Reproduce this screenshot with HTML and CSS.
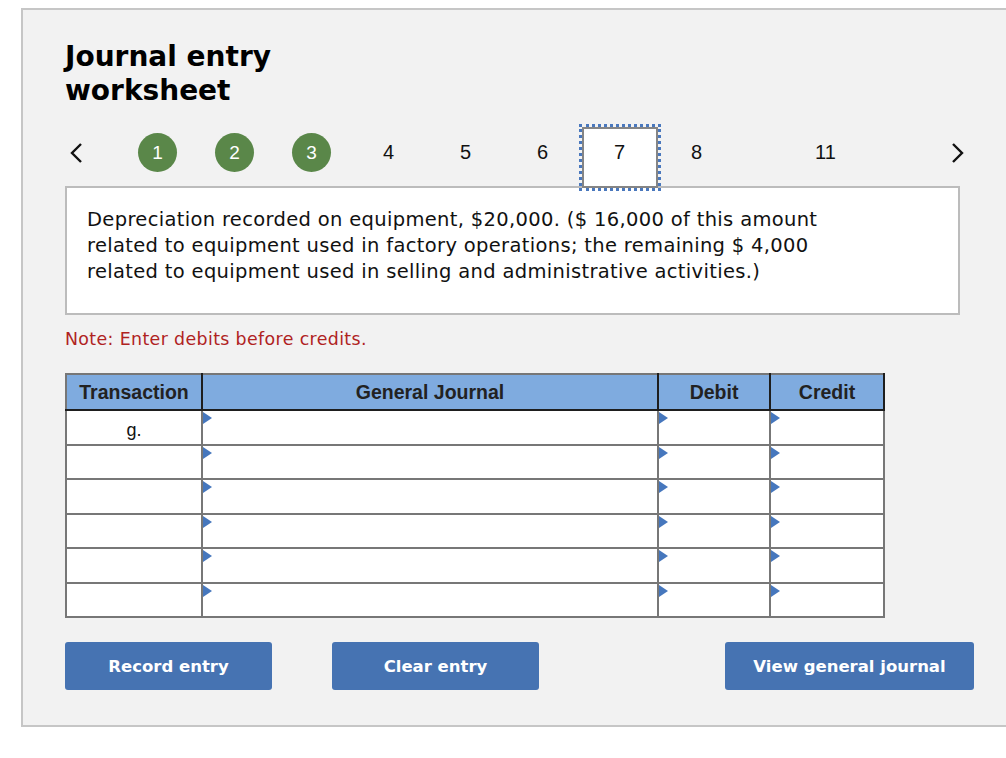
FILE: index.html
```html
<!DOCTYPE html>
<html>
<head>
<meta charset="utf-8">
<link rel="stylesheet" href="styles.css">
</head>
<body>
<div class="panel">
  <h1 class="title">Journal entry<br>worksheet</h1>
  <div class="nav">
    <span class="arrow prev"><svg width="14" height="22" viewBox="0 0 14 22"><path d="M12 2 L3 11 L12 20" fill="none" stroke="#111" stroke-width="2.4"/></svg></span>
    <span class="step"><span class="done">1</span></span>
    <span class="step"><span class="done">2</span></span>
    <span class="step"><span class="done">3</span></span>
    <span class="step">4</span>
    <span class="step">5</span>
    <span class="step">6</span>
    <span class="step current"><span class="cur-box">7</span></span>
    <span class="step">8</span>
    <span class="step skip">11</span>
    <span class="arrow next"><svg width="14" height="22" viewBox="0 0 14 22"><path d="M2 2 L11 11 L2 20" fill="none" stroke="#111" stroke-width="2.4"/></svg></span>
  </div>
  <div class="desc"><p class="desc-text">Depreciation recorded on equipment, $20,000. ($ 16,000 of this amount related to equipment used in factory operations; the remaining $ 4,000 related to equipment used in selling and administrative activities.)</p></div>
  <p class="note">Note: Enter debits before credits.</p>
  <table class="journal">
    <thead>
      <tr><th class="c1">Transaction</th><th class="c2">General Journal</th><th class="c3">Debit</th><th class="c4">Credit</th></tr>
    </thead>
    <tbody>
      <tr><td class="c1">g.</td><td class="dd"></td><td class="dd"></td><td class="dd"></td></tr>
      <tr><td class="c1"></td><td class="dd"></td><td class="dd"></td><td class="dd"></td></tr>
      <tr><td class="c1"></td><td class="dd"></td><td class="dd"></td><td class="dd"></td></tr>
      <tr><td class="c1"></td><td class="dd"></td><td class="dd"></td><td class="dd"></td></tr>
      <tr><td class="c1"></td><td class="dd"></td><td class="dd"></td><td class="dd"></td></tr>
      <tr><td class="c1"></td><td class="dd"></td><td class="dd"></td><td class="dd"></td></tr>
    </tbody>
  </table>
  <div class="buttons">
    <button class="btn rec">Record entry</button>
    <button class="btn clr">Clear entry</button>
    <button class="btn view">View general journal</button>
  </div>
</div>
</body>
</html>
```
FILE: styles.css
```css
html, body { margin: 0; padding: 0; background: #fff; }
body { font-family: "DejaVu Sans", Verdana, sans-serif; color: #111; }
.panel {
  margin: 8px 0 0 21px;
  width: 1000px;
  height: 719px;
  box-sizing: border-box;
  border: 2px solid #c6c6c6;
  background: #f2f2f2;
  padding: 30px 0 0 42px;
}
.title {
  margin: 0;
  font-size: 28px;
  line-height: 34px;
  font-weight: bold;
  color: #000;
}
.nav {
  margin-top: 17px;
  height: 61px;
  display: flex;
  align-items: center;
  font-family: "Liberation Sans", Arial, sans-serif;
  font-size: 20px;
  color: #111;
  position: relative;
  z-index: 2;
}
.arrow { width: 16px; display: flex; justify-content: center; margin-top: -6px; }
.prev { margin-left: 3px; margin-right: 35px; }
.step {
  width: 77px;
  display: flex;
  justify-content: center;
  align-items: center;
  margin-top: -6px;
}
.done {
  width: 39px; height: 39px; border-radius: 50%;
  background: #5a8749; color: #fff;
  display: flex; align-items: center; justify-content: center;
  font-size: 19px;
}
.current { margin-top: 3px; }
.cur-box {
  width: 76px; height: 61px; box-sizing: border-box;
  border: 2px solid #858585;
  outline: 3px dotted #4a78bd;
  outline-offset: 0;
  background: #fff;
  display: flex; justify-content: center; align-items: flex-start;
  padding-top: 12px;
}
.skip { margin-left: 52px; }
.next { margin-left: 86px; }
.desc {
  width: 895px;
  box-sizing: border-box;
  background: #fff;
  border: 2px solid #bcbcbc;
  padding: 19px 20px 28px 20px;
  position: relative;
  z-index: 1;
}
.desc-text {
  margin: 0;
  max-width: 770px;
  font-size: 19.5px;
  letter-spacing: 0.33px;
  line-height: 26px;
  color: #111;
}
.note {
  margin: 14px 0 0 0;
  font-size: 17.4px;
  letter-spacing: 0.36px;
  line-height: 20px;
  color: #b0231f;
}
.journal {
  margin-top: 24px;
  border-collapse: collapse;
  font-family: "Liberation Sans", Arial, sans-serif;
  background: #fff;
  border: 2px solid #777;
}
.journal th {
  background: #7fabdf;
  border: 2px solid #1e1e1e;
  border-top-color: #777;
  height: 34px;
  font-size: 19.5px;
  font-weight: bold;
  color: #222;
  padding: 0;
}
.journal thead th:first-child { border-left-color: #777; }
.journal td {
  border: 2px solid #777;
  height: 32.5px;
  padding: 0;
  font-size: 18px;
  position: relative;
  vertical-align: top;
}
.c1 { width: 134px; text-align: center; }
.journal td.c1 { padding-top: 9px; height: 23.5px; line-height: 20px; }
.c2 { width: 454px; }
.c3 { width: 110px; }
.c4 { width: 112px; }
.dd::before {
  content: "";
  position: absolute;
  left: 0; top: 1px;
  border-left: 9px solid #4677bd;
  border-top: 6px solid transparent;
  border-bottom: 6px solid transparent;
}
.buttons {
  margin-top: 24px;
  display: flex;
  width: 909px;
}
.btn {
  height: 48px;
  border: none;
  border-radius: 3px;
  background: #4673b2;
  color: #fff;
  font-family: "DejaVu Sans", Verdana, sans-serif;
  font-weight: bold;
  font-size: 16.5px;
  padding: 0;
}
.rec { width: 207px; }
.clr { width: 207px; margin-left: 60px; }
.view { width: 249px; margin-left: auto; }
```
